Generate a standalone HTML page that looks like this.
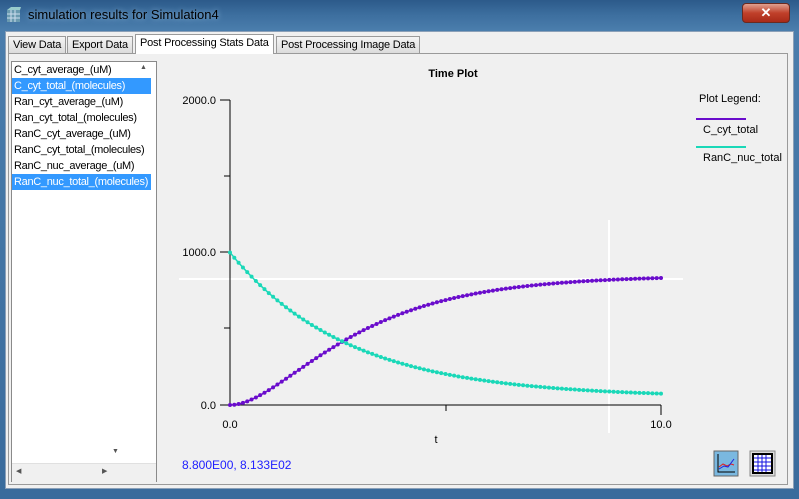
<!DOCTYPE html><html><head><style>
body{margin:0;width:799px;height:499px;overflow:hidden;font-family:"Liberation Sans",sans-serif;font-size:11px;background:#2a5a8c}
.win{position:absolute;left:0;top:0;width:799px;height:499px;background:linear-gradient(180deg,#2c5a8a 0,#3d6f9f 15px,#4a7dac 30px,#3a6b9c 100%)}
.title{position:absolute;left:28px;top:7px;font-size:13px;color:#000;text-shadow:0 0 6px #9cc0e0}
.close{position:absolute;left:742px;top:3px;width:46px;height:18px;border-radius:4px;background:linear-gradient(#e0a090,#c0402a 50%,#a82a18);border:1px solid #6a2a20;color:#fff;text-align:center;font-weight:bold;font-size:13px;line-height:18px}
.inner{position:absolute;left:5px;top:31px;width:787px;height:456px;background:#f0f0f0;border:1px solid #8ba0b8}
.tab{position:absolute;top:36px;height:16px;border:1px solid #9a9a9a;border-bottom:none;background:linear-gradient(#f4f4f4,#dcdcdc);line-height:16px;padding:0 4px;font-size:11px;letter-spacing:-0.2px}
.panel{position:absolute;left:8px;top:53px;width:778px;height:430px;border:1px solid #9a9a9a;background:#f0f0f0}
.list{position:absolute;left:11px;top:61px;width:144px;height:419px;border:1px solid #8a8a8a;background:#fff}
.item{height:16px;line-height:16px;padding-left:2px;font-size:11px;white-space:nowrap;letter-spacing:-0.3px}
.sel{background:#3399ff;color:#fff;width:137px}
</style></head><body>
<div class="win">
<svg style="position:absolute;left:6px;top:7px" width="16" height="16"><rect x="1" y="3" width="13" height="12" fill="#6a9ab0"/><path d="M1 3l4-3h10l-1 3z" fill="#9cc"/><path d="M1 7h13M1 11h13M5 3v12M9 3v12" stroke="#cde" stroke-width="1"/></svg>
<div class="title">simulation results for Simulation4</div>
<div class="close">✕</div>
<div class="inner"></div>
<div class="panel"></div>
<div class="tab" style="left:8px">View Data</div>
<div class="tab" style="left:67px">Export Data</div>
<div class="tab" style="left:135px;top:34px;height:19px;background:#fff;z-index:2">Post Processing Stats Data</div>
<div class="tab" style="left:276px">Post Processing Image Data</div>
<div class="list">
<div class="item">C_cyt_average_(uM)</div>
<div class="item sel">C_cyt_total_(molecules)</div>
<div class="item">Ran_cyt_average_(uM)</div>
<div class="item">Ran_cyt_total_(molecules)</div>
<div class="item">RanC_cyt_average_(uM)</div>
<div class="item">RanC_cyt_total_(molecules)</div>
<div class="item">RanC_nuc_average_(uM)</div>
<div class="item sel">RanC_nuc_total_(molecules)</div>
<div style="position:absolute;left:0;top:401px;width:144px;height:18px;background:#f0f0f0;border-top:1px solid #e0e0e0"></div>
<div style="position:absolute;left:128px;top:2px;font-size:7px;color:#555">▲</div>
<div style="position:absolute;left:100px;top:386px;font-size:7px;color:#555">▼</div>
<div style="position:absolute;left:4px;top:405px;font-size:7px;color:#555">◀</div>
<div style="position:absolute;left:90px;top:405px;font-size:7px;color:#555">▶</div>
</div>
<svg id="plot" style="position:absolute;left:0;top:0" width="799" height="499" font-family="Liberation Sans" font-size="11">
<text x="453" y="77" font-weight="bold" text-anchor="middle">Time Plot</text>
<line x1="179" y1="279" x2="683" y2="279" stroke="#fff" stroke-width="2"/>
<line x1="609" y1="220" x2="609" y2="433" stroke="#fff" stroke-width="2"/>
<path d="M230 100V405H661M220 100h10M224 176h6M220 252h10M224 328h6M220 405h10M446 405v6M661 405v10" stroke="#000" fill="none"/>
<text x="216" y="104" text-anchor="end">2000.0</text>
<text x="216" y="256" text-anchor="end">1000.0</text>
<text x="216" y="409" text-anchor="end">0.0</text>
<text x="230" y="428" text-anchor="middle">0.0</text>
<text x="661" y="428" text-anchor="middle">10.0</text>
<text x="436" y="443" text-anchor="middle">t</text>
<path id="l1" stroke="#6a0ccc" stroke-width="1.5" fill="none"/><path id="l2" stroke="#1ad8b8" stroke-width="1.5" fill="none"/>
<g id="c1" fill="#6a0ccc"></g><g id="c2" fill="#1ad8b8"></g>
<text x="699" y="102">Plot Legend:</text>
<line x1="696" y1="119" x2="746" y2="119" stroke="#6a0ccc" stroke-width="2"/>
<text x="703" y="133">C_cyt_total</text>
<line x1="696" y1="147" x2="746" y2="147" stroke="#1ad8b8" stroke-width="2"/>
<text x="703" y="161">RanC_nuc_total</text>
<text x="182" y="469" fill="#2020ff" font-size="12">8.800E00, 8.133E02</text>
<rect x="714" y="451" width="24" height="25" fill="#7ab8e0" stroke="#666"/>
<path d="M718 454v18h17" stroke="#000" fill="none"/><path d="M719 467l4-3 4 2 4-2 3 1" stroke="#e02020" fill="none"/><path d="M719 469l5-3 4 1 6-8" stroke="#2020e0" fill="none"/>
<rect x="750" y="451" width="25" height="25" fill="#ddd" stroke="#888"/>
<rect x="753" y="454" width="19" height="19" fill="#fff" stroke="#000" stroke-width="2"/>
<path d="M754 458h17M754 462h17M754 466h17M754 470h17M758 455v17M762 455v17M766 455v17" stroke="#1010e0"/>
</svg>
</div>
<script>
var p1='',p2='',d1='',d2='',X=t=>230+t*43.1,Y=v=>405-v*0.1525;
for(var i=0;i<=100;i++){var t=i/10;
var a=850*Math.pow(1-Math.exp(-0.46*t),2), b=950*Math.exp(-0.365*t)+50;
d1+=(i?'L':'M')+X(t)+' '+Y(a);d2+=(i?'L':'M')+X(t)+' '+Y(b);
p1+='<circle cx="'+X(t)+'" cy="'+Y(a)+'" r="2"/>';p2+='<circle cx="'+X(t)+'" cy="'+Y(b)+'" r="2"/>';}
document.getElementById('c1').innerHTML=p1;document.getElementById('c2').innerHTML=p2;
document.getElementById('l1').setAttribute('d',d1);document.getElementById('l2').setAttribute('d',d2);
</script>
</body></html>
